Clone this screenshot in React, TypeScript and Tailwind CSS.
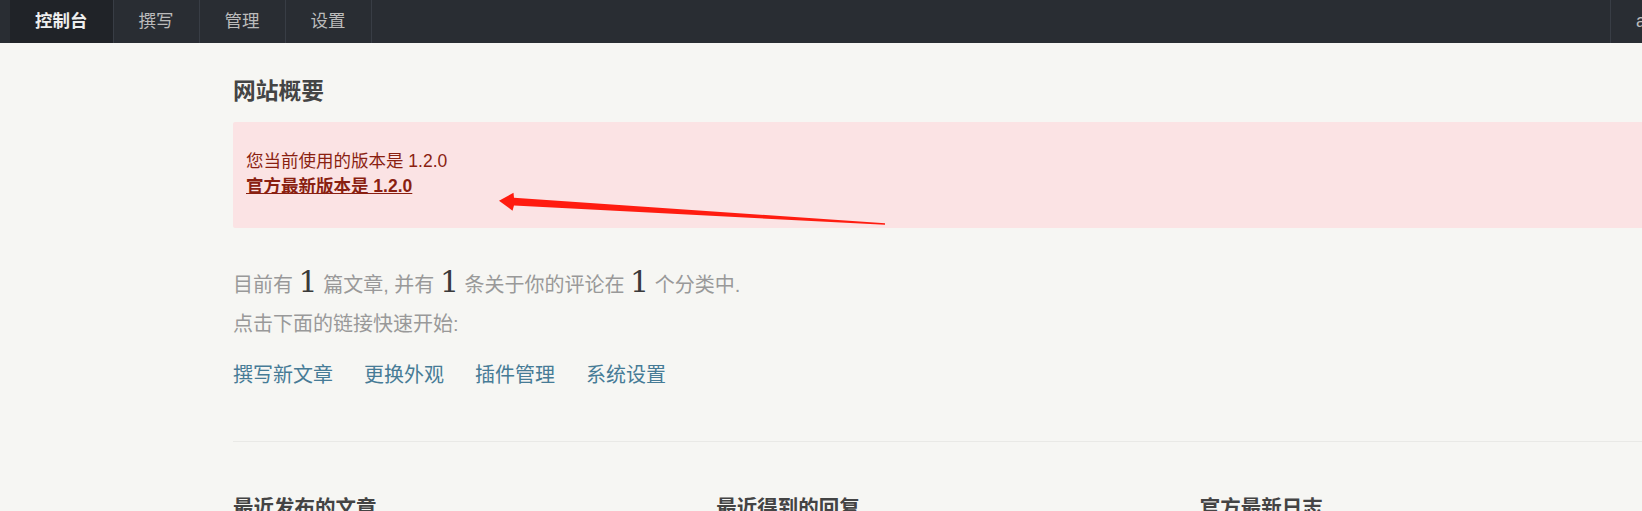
import React from "react";

const FONT = { fontFamily: '"Liberation Sans", "Noto Sans CJK SC", Arial, sans-serif' };

function Big({ children }: { children: React.ReactNode }) {
  return (
    <em className="not-italic text-[#3a3a3a] text-[30px] leading-none font-['DejaVu_Serif',serif]">
      {children}
    </em>
  );
}

export default function App() {
  const tabs = ["撰写", "管理", "设置"];
  return (
    <div className="relative w-[1642px] h-[511px] overflow-hidden bg-[#F6F6F3]" style={FONT}>
      {/* top nav */}
      <div className="flex h-[43px] bg-[#292D33] pl-[10px] text-[17.5px] leading-[43px] text-[#BBB]">
        <a className="px-[25px] bg-[#202328] border-r border-[#383D45] font-bold text-[#eee]">控制台</a>
        {tabs.map((t) => (
          <a key={t} className="px-[25px] border-r border-[#383D45]">
            {t}
          </a>
        ))}
        <div className="flex-1" />
        <div className="w-[32px] shrink-0 overflow-hidden whitespace-nowrap border-l border-[#383D45] pl-[25px] text-[#BBB]">
          admin
        </div>
      </div>

      {/* main */}
      <div className="pl-[233px]">
        <div className="w-[1450px]">
          <h2 className="mt-[33px] text-[22.75px] leading-[30px] font-bold text-[#444]">网站概要</h2>

          <div className="mt-[16px] rounded-[2px] bg-[#FBE3E4] px-[13px] pt-[27px] pb-[29px] text-[17.5px] leading-[25px] text-[#8A1F11]">
            <p>您当前使用的版本是 1.2.0</p>
            <p>
              <a className="font-bold underline">官方最新版本是 1.2.0</a>
            </p>
          </div>

          <div className="text-[20px] text-[#999]">
            <p className="mt-[38px] leading-[39px]">
              目前有 <Big>1</Big> 篇文章, 并有 <Big>1</Big> 条关于你的评论在 <Big>1</Big> 个分类中.
            </p>
            <p className="leading-[39px]">点击下面的链接快速开始:</p>
            <div className="mt-[16px] flex gap-[31px] leading-[30px] text-[#467B96]">
              <a>撰写新文章</a>
              <a>更换外观</a>
              <a>插件管理</a>
              <a>系统设置</a>
            </div>
          </div>

          <div className="mt-[51px] h-px bg-[#E9E9E6]" />

          <div className="mt-[51px] grid grid-cols-3 text-[20.5px] leading-[30px] font-bold text-[#444]">
            <h3>最近发布的文章</h3>
            <h3>最近得到的回复</h3>
            <h3>官方最新日志</h3>
          </div>
        </div>
      </div>

      {/* red annotation arrow */}
      <svg
        className="pointer-events-none absolute left-0 top-0"
        width="1642"
        height="511"
        viewBox="0 0 1642 511"
      >
        <polygon
          points="499,200.7 513.5,192.8 514,197.7 885,223.3 885,224.8 514,205.6 512.5,210.7"
          fill="#FF1C10"
        />
      </svg>
    </div>
  );
}
